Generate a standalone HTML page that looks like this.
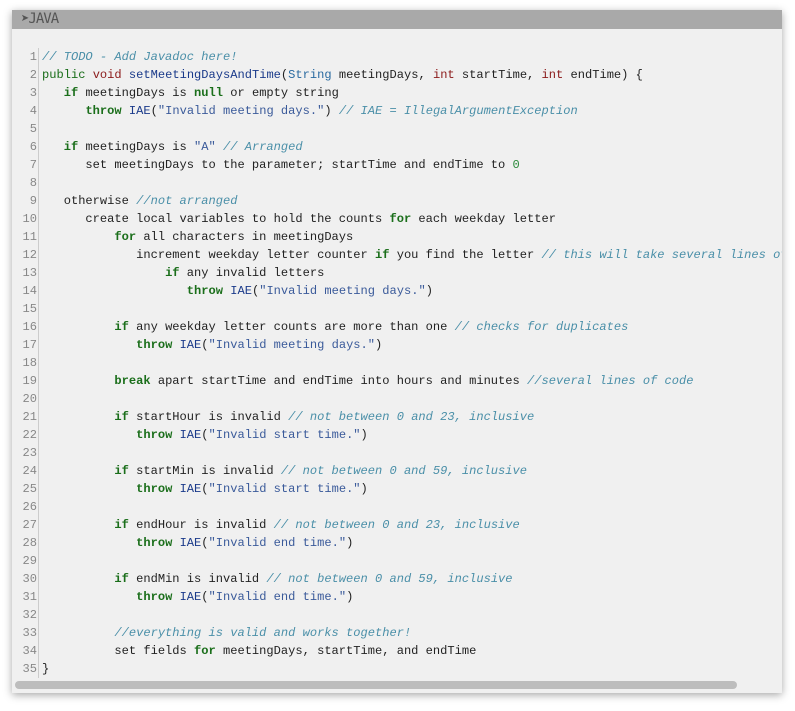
<!DOCTYPE html>
<html><head><style>
body{margin:0;width:795px;height:711px;background:#fff;overflow:hidden;font-family:"Liberation Mono",monospace}
.p{position:absolute;left:12px;top:10px;width:770px;height:683px;background:#f0f0f0;box-shadow:0 2px 8px rgba(0,0,0,.35)}
.h{height:19px;background:#a9a9a9;color:#555;font-size:14px;line-height:19px;padding-left:9px;font-family:"DejaVu Sans Mono",monospace;letter-spacing:-1px}
.c{position:absolute;left:0;top:38px;width:770px;height:630px;overflow:hidden;font-size:12.07px;line-height:18px;color:#222}
.ln{position:absolute;left:0;top:0;width:25px;text-align:right;color:#888;border-right:1px solid #ccc;padding-right:1px}
.code{position:absolute;left:30px;top:0;white-space:pre}
.k{color:#1a6e1a;font-weight:bold}.cm{color:#4a8fa8;font-style:italic}.s{color:#3a5a9a}.f{color:#1a3a8a}.v{color:#8b1a1a}.t{color:#2a6aa0}.n{color:#2a8a3a}
.sb{position:absolute;left:3px;top:671px;width:722px;height:8px;border-radius:4px;background:#bdbdbd}
</style></head><body>
<div class="p"><div class="h">➤JAVA</div>
<div class="c"><div class="ln">1<br>2<br>3<br>4<br>5<br>6<br>7<br>8<br>9<br>10<br>11<br>12<br>13<br>14<br>15<br>16<br>17<br>18<br>19<br>20<br>21<br>22<br>23<br>24<br>25<br>26<br>27<br>28<br>29<br>30<br>31<br>32<br>33<br>34<br>35</div>
<div class="code"><span class="cm">// TODO - Add Javadoc here!</span>
<span class="k" style="font-weight:normal">public</span> <span class="v">void</span> <span class="f">setMeetingDaysAndTime</span>(<span class="t">String</span> meetingDays, <span class="v">int</span> startTime, <span class="v">int</span> endTime) {
   <span class="k">if</span> meetingDays is <span class="k">null</span> or empty string
      <span class="k">throw</span> <span class="f">IAE</span>(<span class="s">"Invalid meeting days."</span>) <span class="cm">// IAE = IllegalArgumentException</span>

   <span class="k">if</span> meetingDays is <span class="s">"A"</span> <span class="cm">// Arranged</span>
      set meetingDays to the parameter; startTime and endTime to <span class="n">0</span>

   otherwise <span class="cm">//not arranged</span>
      create local variables to hold the counts <span class="k">for</span> each weekday letter
          <span class="k">for</span> all characters in meetingDays
             increment weekday letter counter <span class="k">if</span> you find the letter <span class="cm">// this will take several lines of code</span>
                 <span class="k">if</span> any invalid letters
                    <span class="k">throw</span> <span class="f">IAE</span>(<span class="s">"Invalid meeting days."</span>)

          <span class="k">if</span> any weekday letter counts are more than one <span class="cm">// checks for duplicates</span>
             <span class="k">throw</span> <span class="f">IAE</span>(<span class="s">"Invalid meeting days."</span>)

          <span class="k">break</span> apart startTime and endTime into hours and minutes <span class="cm">//several lines of code</span>

          <span class="k">if</span> startHour is invalid <span class="cm">// not between 0 and 23, inclusive</span>
             <span class="k">throw</span> <span class="f">IAE</span>(<span class="s">"Invalid start time."</span>)

          <span class="k">if</span> startMin is invalid <span class="cm">// not between 0 and 59, inclusive</span>
             <span class="k">throw</span> <span class="f">IAE</span>(<span class="s">"Invalid start time."</span>)

          <span class="k">if</span> endHour is invalid <span class="cm">// not between 0 and 23, inclusive</span>
             <span class="k">throw</span> <span class="f">IAE</span>(<span class="s">"Invalid end time."</span>)

          <span class="k">if</span> endMin is invalid <span class="cm">// not between 0 and 59, inclusive</span>
             <span class="k">throw</span> <span class="f">IAE</span>(<span class="s">"Invalid end time."</span>)

          <span class="cm">//everything is valid and works together!</span>
          set fields <span class="k">for</span> meetingDays, startTime, and endTime
}</div></div>
<div class="sb"></div></div>
</body></html>
